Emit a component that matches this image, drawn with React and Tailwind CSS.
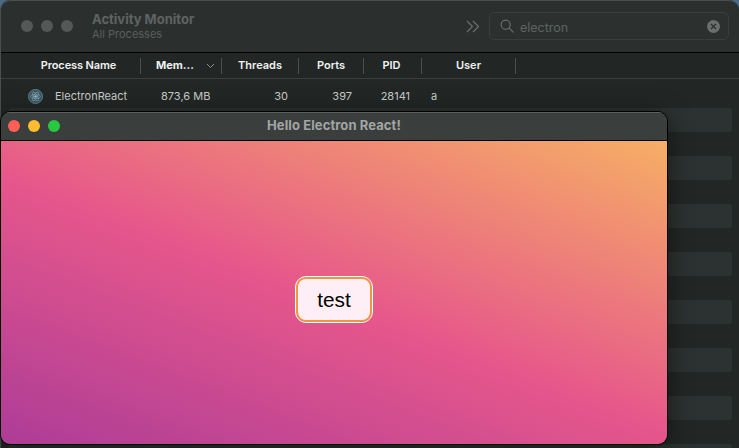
import React from "react";

const FONT = "font-['Inter','Liberation_Sans',sans-serif]";

function Sep() {
  return <div className="h-[16px] w-px bg-[#4a4f4f] shrink-0" />;
}

function HeaderCell({ w, children, bold, align = "justify-center", extra = "" }) {
  return (
    <div className={`flex items-center ${align} ${w} shrink-0 text-[11px] ${bold ? "font-bold" : "font-semibold"} text-[#f0f1f1] ${extra}`}>
      {children}
    </div>
  );
}

function Stripe() {
  return (
    <div className="h-[48px] shrink-0 pb-[24px]">
      <div className="h-[24px] rounded-[4px] bg-[#2c3231]" />
    </div>
  );
}

export default function App() {
  return (
    <div className={`relative h-[448px] w-[739px] overflow-hidden bg-[#4a6a8a] ${FONT}`}>
      <div className="flex h-[448px] flex-col rounded-t-[10px] border-l border-[#4b4f4f] bg-[#222726]">
        <div className="flex h-[52px] shrink-0 items-center rounded-t-[10px] border-t border-[#4b4f4f] bg-[#2b302f] pb-[1px] pl-[20px] pr-[10px]">
          <div className="flex gap-[8px]">
            <div className="h-[12px] w-[12px] rounded-full bg-[#545857]" />
            <div className="h-[12px] w-[12px] rounded-full bg-[#545857]" />
            <div className="h-[12px] w-[12px] rounded-full bg-[#545857]" />
          </div>
          <div className="ml-[19px] mt-[1px] flex flex-col">
            <div className="text-[13px] leading-[15px] font-bold text-[#5f6362]">Activity Monitor</div>
            <div className="text-[11px] leading-[15px] text-[#5a5e5d]">All Processes</div>
          </div>
          <svg className="ml-auto mr-[9px]" width="14" height="13" viewBox="0 0 14 13" fill="none" stroke="#6f7372" strokeWidth="1.1">
            <path d="M1 1l5.5 5.5L1 12M7 1l5.5 5.5L7 12" />
          </svg>
          <div className="flex h-[28px] w-[240px] items-center rounded-[5px] border border-[#3a3f3e] bg-[#2c3130] pl-[10px] pr-[8px]">
            <svg width="14" height="14" viewBox="0 0 14 14" fill="none" stroke="#6d7170" strokeWidth="1.1">
              <circle cx="5.7" cy="5.7" r="4.6" />
              <path d="M9.2 9.2l4 4" strokeLinecap="round" />
            </svg>
            <span className="ml-[6px] pt-[4px] text-[12.5px] text-[#5f6362]">electron</span>
            <div className="ml-auto flex h-[13px] w-[13px] items-center justify-center rounded-full bg-[#6a6e6d]">
              <svg width="7" height="7" viewBox="0 0 7 7" stroke="#2b302f" strokeWidth="1.2">
                <path d="M1 1l5 5M6 1l-5 5" />
              </svg>
            </div>
          </div>
        </div>
        <div className="h-px shrink-0 bg-black" />
        <div className="flex h-[26px] shrink-0 items-center border-b border-[#3a3f3e] pl-[12px]">
          <HeaderCell w="w-[127px]" extra="pl-[4px] tracking-[-0.1px]">Process Name</HeaderCell>
          <Sep />
          <HeaderCell w="w-[80px]" bold align="justify-start" extra="pl-[15px] pr-[6px]">
            <span>Mem...</span>
            <svg className="ml-auto" width="9" height="6" viewBox="0 0 9 6" fill="none" stroke="#8a8e8d" strokeWidth="1">
              <path d="M1 1l3.5 3.5L8 1" />
            </svg>
          </HeaderCell>
          <Sep />
          <HeaderCell w="w-[76px]">Threads</HeaderCell>
          <Sep />
          <HeaderCell w="w-[64px]">Ports</HeaderCell>
          <Sep />
          <HeaderCell w="w-[57px]" extra="pr-[2px]">PID</HeaderCell>
          <Sep />
          <HeaderCell w="w-[93px]">User</HeaderCell>
          <Sep />
        </div>
        <div className="flex flex-col px-[7px] pt-[5px]">
          <div className="flex h-[24px] shrink-0 items-center text-[11px] text-[#c9cbca]">
            <svg className="ml-[20px]" width="15" height="15" viewBox="0 0 15 15" fill="none">
              <circle cx="7.5" cy="7.5" r="7" fill="#3d5560" stroke="#5d8290" />
              <circle cx="7.5" cy="7.5" r="1.2" fill="#9fc3cf" />
              <g stroke="#86aab7" strokeWidth="0.6">
                <ellipse cx="7.5" cy="7.5" rx="5" ry="2" />
                <ellipse cx="7.5" cy="7.5" rx="5" ry="2" transform="rotate(60 7.5 7.5)" />
                <ellipse cx="7.5" cy="7.5" rx="5" ry="2" transform="rotate(120 7.5 7.5)" />
              </g>
            </svg>
            <span className="ml-[12px] w-[106px]">ElectronReact</span>
            <span className="w-[84px] whitespace-nowrap">873,6 MB</span>
            <span className="w-[43px] text-right">30</span>
            <span className="w-[64px] text-right">397</span>
            <span className="w-[58px] text-right">28141</span>
            <span className="ml-[21px]">a</span>
          </div>
          <Stripe />
          <Stripe />
          <Stripe />
          <Stripe />
          <Stripe />
          <Stripe />
          <Stripe />
          <Stripe />
        </div>
      </div>

      <div className="absolute left-0 top-[111px] flex h-[334px] w-[668px] flex-col overflow-hidden rounded-[10px] border border-black shadow-[0_4px_24px_rgba(0,0,0,0.5)]">
        <div className="flex h-[28px] shrink-0 items-center border-t border-[#5c605f] bg-[#3a3e3c] pb-[1px] pl-[7px]">
          <div className="flex gap-[8px]">
            <div className="h-[12px] w-[12px] rounded-full bg-[#ff5f57]" />
            <div className="h-[12px] w-[12px] rounded-full bg-[#febc2e]" />
            <div className="h-[12px] w-[12px] rounded-full bg-[#28c840]" />
          </div>
          <div className="flex-1 pr-[59px] text-center text-[13px] tracking-[0.1px] font-bold text-[#a3a5a4]">Hello Electron React!</div>
        </div>
        <div className="h-px shrink-0 bg-black" />
        <div className="flex flex-1 items-center justify-center bg-[linear-gradient(200.96deg,#ffe04f_-29.09%,#e6578b_51.77%,#8a2c9e_129.35%)]">
          <button className="mt-[14px] flex h-[45px] w-[76px] items-center justify-center rounded-[10px] border-2 border-[#f0963c] bg-[#fdeff5] text-[20.8px] text-black outline outline-1 outline-white font-['Liberation_Sans',sans-serif]">
            test
          </button>
        </div>
      </div>
    </div>
  );
}
